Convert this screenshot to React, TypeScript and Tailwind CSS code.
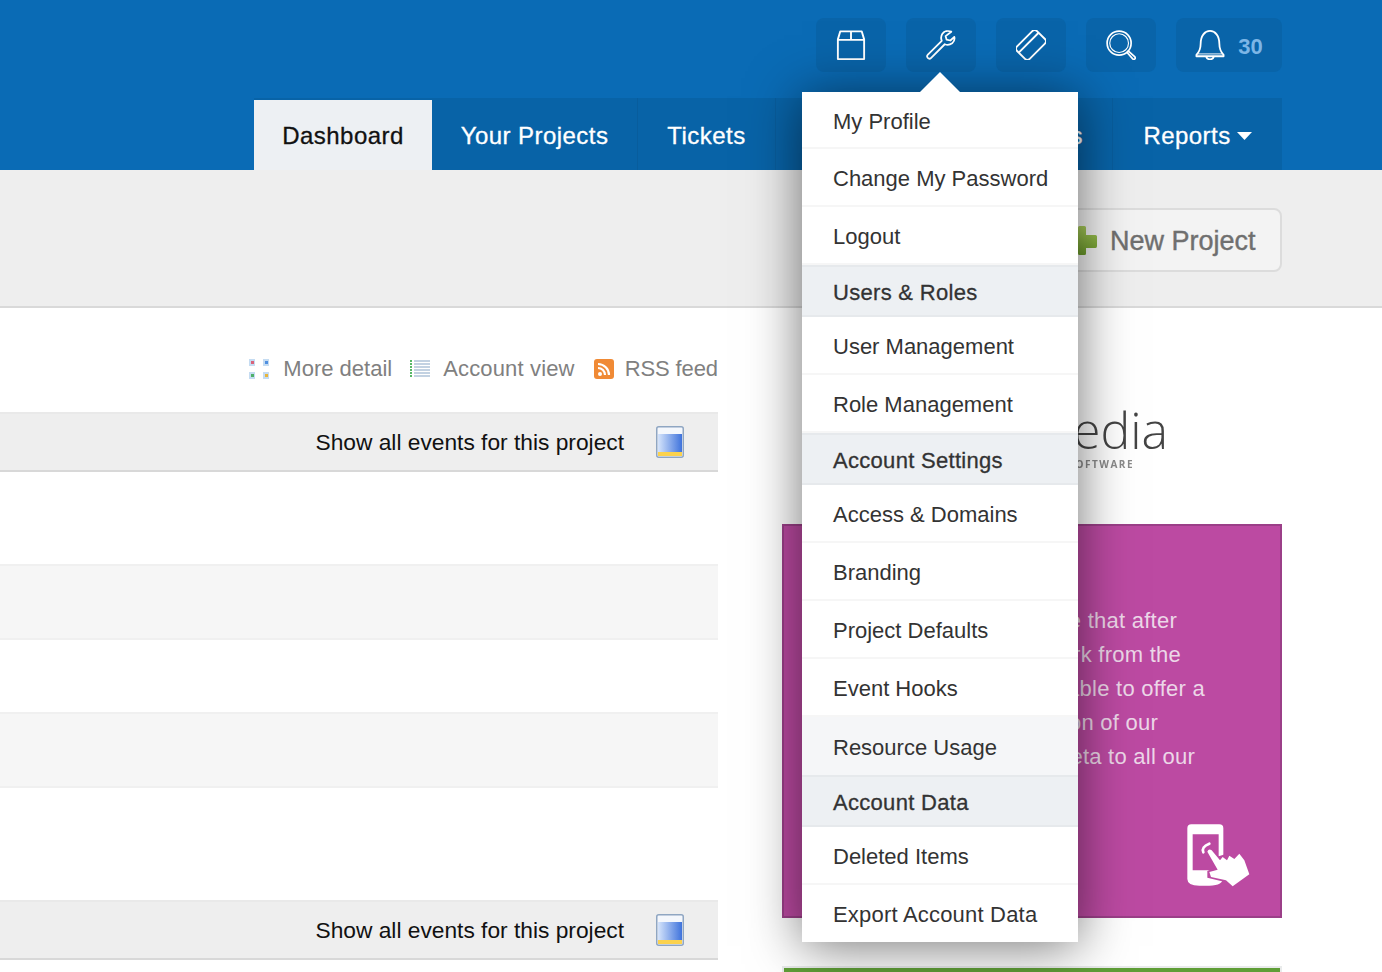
import React from "react";

function BoxIcon() {
  return (
    <svg width="30" height="30" viewBox="0 0 32 32" fill="none" stroke="white" strokeWidth="2" strokeLinejoin="round">
      <path d="M2 31V10L4.500 1.500H27.500L30 10V31Z" />
      <path d="M2 10.500H30M16 1.500V10.500" />
    </svg>
  );
}
function WrenchIcon() {
  return (
    <svg width="30" height="30" viewBox="0 0 32 32" fill="none" stroke="white" strokeWidth="1.900" strokeLinejoin="round" strokeLinecap="round">
      <path d="M27 1.800C23.500.4 19.500 1.200 17.500 4C15.700 6.600 16 9.500 16.800 11.500L2 26.200C.8 27.500.9 28.700 1.900 29.800C3 30.900 4.400 30.800 5.500 29.700L20 15.200C22.500 16.300 25.500 16 27.900 14.200C30 12.500 30.700 9.500 30.200 7.300L26 11.200L21.900 10.200L20.900 6.500Z" />
    </svg>
  );
}
function TicketIcon() {
  return (
    <svg width="30" height="30" viewBox="0 0 32 32" fill="none" stroke="white" strokeWidth="2" strokeLinejoin="round">
      <g transform="translate(16 16) rotate(-45)">
        <rect x="-15" y="-9.500" width="30" height="19" rx="3.500" />
        <path d="M-15 -3.500H15" />
      </g>
    </svg>
  );
}
function SearchIcon() {
  return (
    <svg width="30" height="30" viewBox="0 0 32 32" fill="none" stroke="white" strokeWidth="1.800" strokeLinejoin="round">
      <circle cx="14" cy="14" r="12.800" />
      <circle cx="14" cy="14" r="10" strokeWidth="1.200" />
      <path d="M22.500 24L24 22.500L30.500 28.500C31.500 29.500 31.300 30.300 30.700 30.900C30 31.500 29.200 31.500 28.500 30.800Z" />
    </svg>
  );
}
function BellIcon() {
  return (
    <svg width="30" height="30" viewBox="0 0 32 32" fill="none" stroke="white" strokeWidth="1.900" strokeLinejoin="round">
      <path d="M1.500 26.500C4.500 23.500 6 21 6 15C6 6 10.500 1 16 1C21.500 1 26 6 26 15C26 21 27.500 23.500 30.500 26.500V28H1.500Z" />
      <path d="M2.500 25.500H29.500" strokeWidth="1" />
      <path d="M12 28.500C12.500 30.500 14 31.300 16 31.300C18 31.300 19.500 30.500 20 28.500" />
    </svg>
  );
}
function DocIcon() {
  return (
    <svg width="28" height="32" viewBox="0 0 28 32" className="shrink-0">
      <defs>
        <linearGradient id="docg" x1="0" x2="1" y1="0" y2="0">
          <stop offset="0" stopColor="#d5e4fb" />
          <stop offset="1" stopColor="#3f73dc" />
        </linearGradient>
      </defs>
      <rect x="0.750" y="0.750" width="26.500" height="30.500" rx="2" fill="#f4f7fc" stroke="#8fa6c2" strokeWidth="1.500" />
      <rect x="2" y="8" width="24" height="18" fill="url(#docg)" />
      <rect x="2" y="26" width="24" height="4" fill="#fbd24e" />
    </svg>
  );
}
function DetailIcon() {
  const c = ["#d9627a", "#4f8fe0", "#4fb06a", "#e8b53c"];
  return (
    <svg width="20" height="20" viewBox="0 0 20 20" className="shrink-0">
      {[[0, 0], [14, 0], [0, 13], [14, 13]].map(([x, y], i) => (
        <g key={i}>
          <rect x={x} y={y} width="6" height="7" fill="#c5dcf2" />
          <rect x={x + 2} y={y + 2} width="3" height="3" fill={c[i]} />
        </g>
      ))}
    </svg>
  );
}
function ListIcon() {
  return (
    <svg width="20" height="20" viewBox="0 0 20 20" className="shrink-0">
      {[1, 4, 7, 10, 13, 16].map((y) => (
        <g key={y}>
          <rect x="0" y={y} width="2" height="2" fill="#58b868" />
          <rect x="4" y={y} width="16" height="2" fill="#c3d2e2" />
        </g>
      ))}
    </svg>
  );
}
function RssIcon() {
  return (
    <svg width="20" height="20" viewBox="0 0 20 20" className="shrink-0">
      <rect width="20" height="20" rx="3" fill="#f08a35" />
      <circle cx="6" cy="15" r="2" fill="white" />
      <path d="M4 9A7 7 0 0 1 11 16M4 5A11 11 0 0 1 15 16" stroke="white" strokeWidth="2.200" fill="none" />
    </svg>
  );
}
function PlusIcon() {
  return (
    <svg width="28" height="29" viewBox="0 0 28 29" className="shrink-0">
      <defs>
        <linearGradient id="plusg" x1="0" x2="0" y1="0" y2="1">
          <stop offset="0" stopColor="#a8cb5a" />
          <stop offset="1" stopColor="#6b9a2a" />
        </linearGradient>
      </defs>
      <path d="M9 1.500Q9 0 10.500 0H15.500Q17 0 17 1.500V9H26.500Q28 9 28 10.500V20Q28 22 26.500 22H17V27.500Q17 29 15.500 29H10.500Q9 29 9 27.500V22H1.500Q0 22 0 20V10.500Q0 9 1.500 9H9Z" fill="url(#plusg)" />
    </svg>
  );
}
function TouchIcon() {
  return (
    <svg width="65" height="65" viewBox="380 128 195 195">
      <path fillRule="evenodd" fill="white" d="M396 132H480Q492 132 492 144V290Q492 316 450 316H420Q384 316 384 296V144Q384 132 396 132ZM400 162V270H478V162Z" />
      <path d="M438 214L466 262L444 272L444 292L500 306L520 324L576 283L558 240L542 214L522 218L508 218L490 224L478 228L456 200Q440 198 438 214Z" fill="#bc4aa2" />
      <path d="M444 214Q448 204 457 210L482 240L490 230L503 240L510 226L525 236L540 220L555 240L570 282L520 318L500 300L455 290L450 275L475 268Z" fill="white" />
      <path d="M432 216Q425 200 450 190" stroke="white" strokeWidth="8" fill="none" strokeLinecap="round" />
    </svg>
  );
}

function TopBtn({ children, wide }: { children: React.ReactNode; wide?: boolean }) {
  return (
    <div className={`flex h-[54px] items-center justify-center rounded-lg bg-[#0964a9] ${wide ? "w-[106px] gap-[13px]" : "w-[70px]"}`}>
      {children}
    </div>
  );
}

function Tab({ children, active, cls }: { children: React.ReactNode; active?: boolean; cls: string }) {
  return (
    <div className={`flex items-center text-[24px] tracking-[0.45px] [-webkit-text-stroke:0.3px] ${cls} ${active ? "mt-[2px] h-[70px] bg-[#edf0f3] pt-[2px] text-[#111]" : "h-[72px] pt-[4px] text-white"}`}>
      {children}
    </div>
  );
}

function ShowRow() {
  return (
    <div className="flex h-[60px] items-center justify-end border-b-2 border-t-2 border-b-[#d8d8d8] border-t-[#e9e9e9] bg-[#eeeeee] pr-[34px] text-[22.75px] text-[#111]">
      <span className="mr-[32px]">Show all events for this project</span>
      <DocIcon />
    </div>
  );
}

type MenuItem = { label: string; kind?: "head" | "hover"; h?: string };
const menu: MenuItem[] = [
  { label: "My Profile", h: "h-[57px] pt-[3px]" },
  { label: "Change My Password" },
  { label: "Logout" },
  { label: "Users & Roles", kind: "head" },
  { label: "User Management" },
  { label: "Role Management" },
  { label: "Account Settings", kind: "head" },
  { label: "Access & Domains" },
  { label: "Branding" },
  { label: "Project Defaults" },
  { label: "Event Hooks" },
  { label: "Resource Usage", kind: "hover" },
  { label: "Account Data", kind: "head" },
  { label: "Deleted Items" },
  { label: "Export Account Data", h: "h-[57px] pt-[2px] tracking-[0.2px]" },
];

const promo = [
  { t: "e that after", c: "pr-[103px]" },
  { t: "rk from the", c: "pr-[99px]" },
  { t: "able to offer a", c: "pr-[75px]" },
  { t: "on of our", c: "pr-[122px]" },
  { t: "eta to all our", c: "pr-[85px]" },
];

export default function App() {
  return (
    <div className="relative h-[972px] w-[1382px] overflow-hidden bg-white font-['Liberation_Sans',Arial,sans-serif]">
      <header className="flex h-[170px] flex-col items-end bg-[#0a6bb5] pr-[100px]">
        <div className="mt-[18px] flex gap-[20px]">
          <TopBtn><BoxIcon /></TopBtn>
          <TopBtn><WrenchIcon /></TopBtn>
          <TopBtn><TicketIcon /></TopBtn>
          <TopBtn><SearchIcon /></TopBtn>
          <TopBtn wide>
            <BellIcon />
            <span className="pt-[2px] text-[22px] font-bold text-[#7db6e6]">30</span>
          </TopBtn>
        </div>
        <nav className="mt-[26px] flex h-[72px] w-[1028px] bg-[#0863a7]">
          <Tab active cls="w-[178px] justify-center"><span>Dashboard</span></Tab>
          <Tab cls="w-[206px] justify-center border-r border-[#085d9d]"><span>Your Projects</span></Tab>
          <Tab cls="w-[138px] justify-center border-r border-[#085d9d]"><span>Tickets</span></Tab>
          <Tab cls="w-[337px] justify-end border-r border-[#085d9d] pr-[29px]"><span>s</span></Tab>
          <Tab cls="w-[169px] justify-center gap-[6px]">
            <span>Reports</span>
            <svg width="15" height="8" viewBox="0 0 15 8"><path d="M0 0H15L7.500 8Z" fill="white" /></svg>
          </Tab>
        </nav>
      </header>

      <section className="flex h-[138px] items-start justify-end border-b-2 border-[#d9d9d9] bg-[#eeeeee] pr-[100px] pt-[38px]">
        <div className="flex h-[64px] w-[230px] items-center gap-[13px] rounded-lg border-2 border-[#dcdcdc] bg-[#f3f3f3] pl-[15px]">
          <PlusIcon />
          <span className="pt-[2px] text-[27px] text-[#6f6f6f] [-webkit-text-stroke:0.4px]">New Project</span>
        </div>
      </section>

      <div className="flex">
        <main className="w-[718px] shrink-0">
          <div className="flex h-[104px] items-end justify-end pb-[29px] text-[22px] leading-[28px] text-[#808080]">
            <div className="flex items-center">
              <DetailIcon />
              <span className="ml-[14px]">More detail</span>
              <span className="ml-[18px]"><ListIcon /></span>
              <span className="ml-[13px] tracking-[0.15px]">Account view</span>
              <span className="ml-[19px]"><RssIcon /></span>
              <span className="ml-[11px] tracking-[-0.1px]">RSS feed</span>
            </div>
          </div>
          <ShowRow />
          <div className="h-[92px]" />
          <div className="h-[76px] border-y-2 border-[#f0f0f0] bg-[#f6f6f6]" />
          <div className="h-[72px]" />
          <div className="h-[76px] border-y-2 border-[#f0f0f0] bg-[#f6f6f6]" />
          <div className="h-[112px]" />
          <ShowRow />
        </main>

        <aside className="ml-[64px] w-[500px] shrink-0">
          <div className="flex h-[216px] flex-col items-end pr-[114px] pt-[102px] font-['Open_Sans',sans-serif] text-[#444]">
            <span className="text-[50px] font-light leading-[40px] blur-[0.4px]">edia</span>
            <span className="mr-[34px] mt-[8px] text-[10px] font-bold leading-[12px] tracking-[1.500px] text-[#8a8a8a] blur-[0.4px]">OFTWARE</span>
          </div>
          <div className="flex h-[394px] flex-col border-2 border-[#9b3f88] bg-[#bc4aa2] pt-[78px]">
            {promo.map((p) => (
              <p key={p.t} className={`text-right text-[22px] leading-[34px] tracking-[0.25px] text-[#ecd7e8] ${p.c}`}>{p.t}</p>
            ))}
            <div className="mt-[49px] flex justify-end pr-[29px]"><TouchIcon /></div>
          </div>
          <div className="mt-[48px] h-[6px] border-x-2 border-t-2 border-[#e9ebeb] bg-[#5f9e37]" />
        </aside>
      </div>

      <div className="absolute left-[920px] top-[72px] z-20 h-0 w-0 border-x-[20px] border-b-[20px] border-x-transparent border-b-white" />
      <div className="absolute left-[802px] top-[92px] z-10 w-[276px] bg-white text-[22px] text-[#333] shadow-[0_4px_50px_rgba(0,0,0,0.55)]">
        {menu.map((m) => {
          if (m.kind === "head") {
            return (
              <div key={m.label} className="flex h-[52px] items-center border-y-2 border-[#e6e9ec] bg-[#edf0f3] pl-[31px] pt-[2px] tracking-[0.3px] [-webkit-text-stroke:0.3px]">
                {m.label}
              </div>
            );
          }
          return (
            <div key={m.label} className={`flex items-center pl-[31px] ${m.h ?? "h-[58px] pt-[2px]"} ${m.kind === "hover" ? "bg-[#f5f6f8]" : "border-b-2 border-[#f6f6f6] last:border-b-0"}`}>
              {m.label}
            </div>
          );
        })}
      </div>
    </div>
  );
}
